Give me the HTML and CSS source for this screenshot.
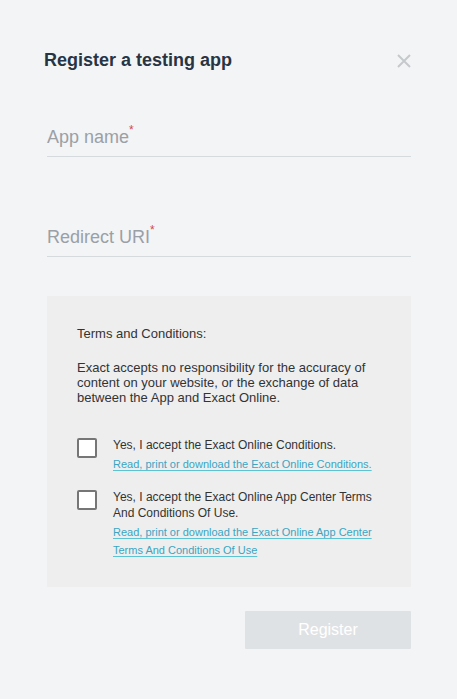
FILE: index.html
```html
<!DOCTYPE html>
<html lang="en">
<head>
<meta charset="utf-8">
<title>Register a testing app</title>
<link rel="stylesheet" href="styles.css">
</head>
<body>
<div class="dialog">
  <div class="header">
    <h1 class="title">Register a testing app</h1>
    <button class="close" aria-label="Close">
      <svg width="14" height="14" viewBox="0 0 14 14"><path d="M1 1L13 13M13 1L1 13" stroke="#c6c9cc" stroke-width="2" fill="none"/></svg>
    </button>
  </div>
  <div class="field"><span class="placeholder">App name</span><span class="req">*</span></div>
  <div class="field field-second"><span class="placeholder">Redirect URI</span><span class="req">*</span></div>
  <div class="terms">
    <p class="terms-title">Terms and Conditions:</p>
    <p class="terms-text">Exact accepts no responsibility for the accuracy of content on your website, or the exchange of data between the App and Exact Online.</p>
    <div class="check-row">
      <span class="checkbox"></span>
      <div class="check-body">
        <div class="check-label">Yes, I accept the Exact Online Conditions.</div>
        <a class="check-link" href="#">Read, print or download the Exact Online Conditions.</a>
      </div>
    </div>
    <div class="check-row check-row-second">
      <span class="checkbox"></span>
      <div class="check-body">
        <div class="check-label">Yes, I accept the Exact Online App Center Terms And Conditions Of Use.</div>
        <a class="check-link" href="#">Read, print or download the Exact Online App Center Terms And Conditions Of Use</a>
      </div>
    </div>
  </div>
  <div class="actions">
    <button class="register">Register</button>
  </div>
</div>
</body>
</html>
```
FILE: styles.css
```css
html, body {
  margin: 0;
  padding: 0;
  background: #f3f4f6;
  font-family: "Liberation Sans", Arial, sans-serif;
}
.dialog {
  padding: 48px 46px 0 47px;
}
.header {
  display: flex;
  justify-content: space-between;
  align-items: center;
}
.title {
  margin: 0 0 0 -3px;
  font-size: 18px;
  line-height: 24px;
  font-weight: bold;
  color: #273443;
}
.close {
  border: 0;
  background: none;
  padding: 0;
  width: 14px;
  height: 14px;
  margin-right: 0;
  margin-top: 1px;
  display: flex;
}
.field {
  margin-top: 54px;
  padding-bottom: 8px;
  border-bottom: 1px solid #d7dadd;
  font-size: 18px;
  line-height: 22px;
  color: #9aa0a6;
}
.field-second {
  margin-top: 69px;
}
.req {
  color: #d4474f;
  font-size: 12px;
  vertical-align: top;
  line-height: 12px;
  position: relative;
  top: -2px;
}
.terms {
  margin-top: 39px;
  background: #eeeeef;
  padding: 30px 30px 28px 30px;
  color: #333;
}
.terms-title {
  margin: 0;
  font-size: 13px;
  line-height: 15px;
}
.terms-text {
  margin: 19px 0 0;
  font-size: 13px;
  line-height: 15px;
}
.check-row {
  display: flex;
  gap: 16px;
  margin-top: 32px;
}
.check-row-second {
  margin-top: 16px;
}
.checkbox {
  flex: none;
  width: 16px;
  height: 16px;
  border: 2px solid #767676;
  border-radius: 2px;
  background: #fff;
  margin-top: 1px;
}
.check-body {
  flex: 1;
}
.check-label {
  font-size: 12px;
  line-height: 16px;
  color: #333;
}
.check-link {
  display: block;
  margin-top: 2px;
  font-size: 11px;
  line-height: 18px;
  color: #3aa5c2;
  text-decoration: underline;
  text-decoration-color: #5cc3d3;
  text-underline-offset: 2px;
}
.actions {
  display: flex;
  justify-content: flex-end;
  margin-top: 24px;
}
.register {
  width: 166px;
  height: 38px;
  border: 0;
  border-radius: 1px;
  background: #dfe2e5;
  color: #fff;
  font-family: "Liberation Sans", Arial, sans-serif;
  font-size: 16px;
  padding: 0;
}
```
